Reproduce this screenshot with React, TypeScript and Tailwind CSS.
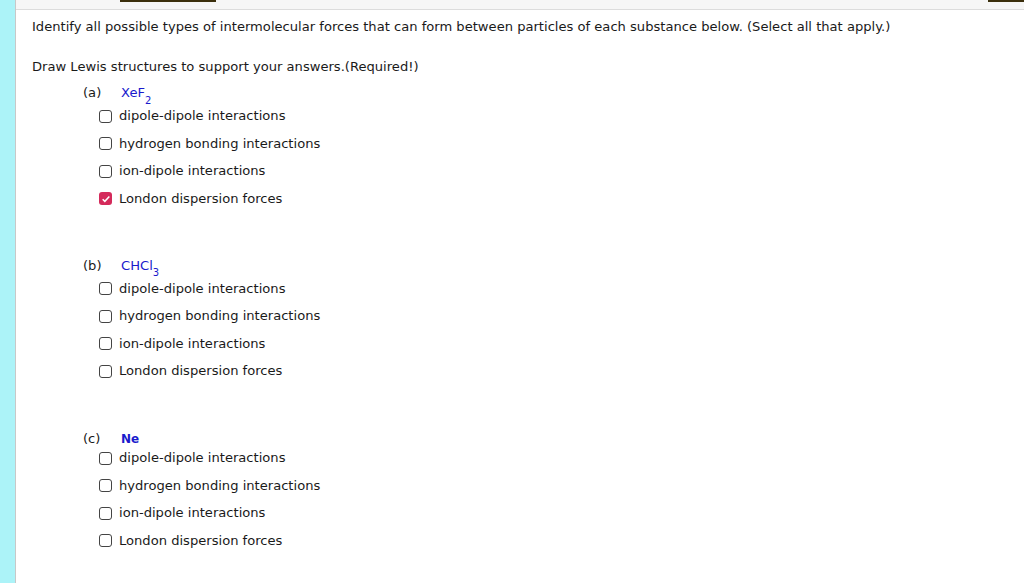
import React from 'react';

const options = [
  'dipole-dipole interactions',
  'hydrogen bonding interactions',
  'ion-dipole interactions',
  'London dispersion forces',
];

function Box({ checked }: { checked?: boolean }) {
  if (checked) {
    return (
      <span className="w-[13px] h-[13px] rounded-[3px] bg-[#d42a5b] flex items-center justify-center shrink-0">
        <svg viewBox="0 0 12 12" className="w-[10px] h-[10px]">
          <path d="M2 6.2l2.6 2.6L10 3" fill="none" stroke="#fff" strokeWidth={1.8} />
        </svg>
      </span>
    );
  }
  return <span className="w-[13px] h-[13px] rounded-[3px] border border-[#444] bg-white shrink-0" />;
}

function Part({
  letter,
  formula,
  checked,
  rowGap,
}: {
  letter: string;
  formula: React.ReactNode;
  checked: number[];
  rowGap: string;
}) {
  return (
    <div className="pl-[67px]">
      <div className="flex items-center h-[20px]">
        <span className="w-[38px]">({letter})</span>
        <span className="text-[#1a1acc]">{formula}</span>
      </div>
      <div className={`pl-[16px] flex flex-col ${rowGap}`}>
        {options.map((o, i) => (
          <label key={o} className="flex items-center gap-[7px] h-[20px]">
            <Box checked={checked.includes(i)} />
            <span>{o}</span>
          </label>
        ))}
      </div>
    </div>
  );
}

export default function App() {
  return (
    <div className="min-h-screen flex bg-white text-[13.1px] text-[#1a1a1a] font-['DejaVu_Sans',Verdana,sans-serif]">
      {/* left accent stripe */}
      <div className="w-[16px] bg-[#acf3f8] border-r border-[#c8c8c8] shrink-0" />

      <div className="flex-1 flex flex-col">
        {/* top strip */}
        <div className="h-[10px] bg-[#f6f6f6] border-b border-[#dcdcdc] flex">
          <div className="w-[104px]" />
          <div className="w-[96px] h-[2px] bg-[#3b2f0c]" />
          <div className="flex-1" />
          <div className="w-[36px] h-[2px] bg-[#3b2f0c]" />
        </div>

        <div className="pl-[16px] pt-[7px]">
          <p className="leading-[20px]">
            Identify all possible types of intermolecular forces that can form between particles of each substance below. (Select all that apply.)
          </p>
          <p className="leading-[20px] mt-[20px]">Draw Lewis structures to support your answers.(Required!)</p>
        </div>

        <div className="mt-[6px]">
          <Part
            letter="a"
            formula={
              <>
                XeF<sub className="text-[10px] align-[-4px]">2</sub>
              </>
            }
            checked={[3]}
            rowGap="gap-[7.5px] pt-[3px]"
          />
        </div>
        <div className="mt-[47px]">
          <Part
            letter="b"
            formula={
              <>
                CHCl<sub className="text-[10px] align-[-4px]">3</sub>
              </>
            }
            checked={[]}
            rowGap="gap-[7.5px] pt-[3px]"
          />
        </div>
        <div className="mt-[48px]">
          <Part letter="c" formula={<span className="font-bold text-[12px]">Ne</span>} checked={[]} rowGap="gap-[7.5px] -mt-[1px]" />
        </div>
      </div>
    </div>
  );
}
